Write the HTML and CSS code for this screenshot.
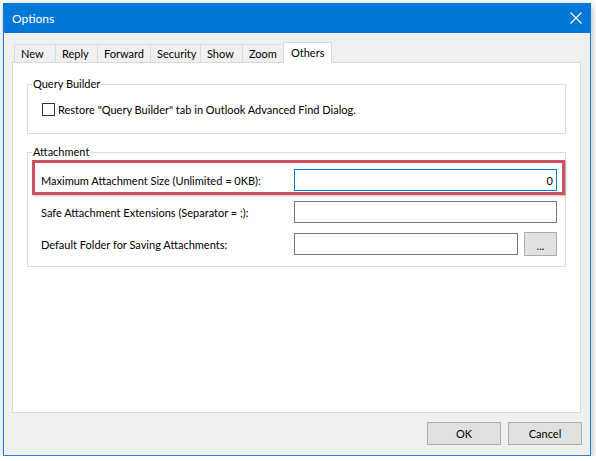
FILE: index.html
```html
<!DOCTYPE html>
<html lang="en">
<head>
    <meta charset="UTF-8">
    <meta name="viewport" content="width=device-width, initial-scale=1.0">
    <title>Options</title>
    <link rel="stylesheet" href="styles.css">
</head>
<body>
    <div class="window">
        <div class="titlebar">
            <span class="title">Options</span>
            <svg class="close" width="12" height="12" viewBox="0 0 12 12">
                <path d="M0.5 0.5 L11.5 11.5 M11.5 0.5 L0.5 11.5" stroke="#fff" stroke-width="1.1" fill="none"/>
            </svg>
        </div>

        <div class="content">
            <!-- Tabs -->
            <div class="tabs">
                <div class="tab">New</div>
                <div class="tab">Reply</div>
                <div class="tab">Forward</div>
                <div class="tab">Security</div>
                <div class="tab">Show</div>
                <div class="tab">Zoom</div>
                <div class="tab active">Others</div>
            </div>

            <div class="panel">
                <fieldset class="group group-query">
                    <legend>Query Builder</legend>
                    <label class="check">
                        <input type="checkbox" class="checkbox">
                        <span>Restore "Query Builder" tab in Outlook Advanced Find Dialog.</span>
                    </label>
                </fieldset>

                <fieldset class="group group-attach">
                    <legend>Attachment</legend>
                    <div class="group-body">
                        <div class="row highlight">
                            <label class="row-label">Maximum Attachment Size (Unlimited = 0KB):</label>
                            <input type="text" class="field focused" value="0">
                        </div>
                        <div class="row">
                            <label class="row-label">Safe Attachment Extensions (Separator = ;):</label>
                            <input type="text" class="field">
                        </div>
                        <div class="row row-folder">
                            <label class="row-label">Default Folder for Saving Attachments:</label>
                            <input type="text" class="field short">
                            <button class="btn browse">...</button>
                        </div>
                    </div>
                </fieldset>
            </div>

            <!-- Dialog buttons -->
            <div class="actions">
                <button class="btn">OK</button>
                <button class="btn">Cancel</button>
            </div>
        </div>
    </div>
</body>
</html>
```

FILE: styles.css
```css
* {
    box-sizing: border-box;
}
body {
    margin: 0;
    background: #fff;
    font-family: Lato, "Liberation Sans", sans-serif;
    font-size: 11px;
    color: #000;
}
.window {
    margin: 3px 0 0 3px;
    width: 588px;
    height: 453px;
    border: 1px solid #1c7fd4;
    border-top: none;
    background: #f0f0f0;
    display: flex;
    flex-direction: column;
    box-shadow: 1px 2px 8px rgba(0, 0, 0, 0.28);
}
/* Title bar */
.titlebar {
    height: 30px;
    flex: none;
    margin: 0 -1px;
    padding: 0 9px 0 9px;
    background: #0078d7;
    color: #fff;
    font-size: 12px;
    display: flex;
    align-items: center;
    justify-content: space-between;
}
.close {
    display: block;
}
.content {
    flex: 1;
    display: flex;
    flex-direction: column;
    padding: 9px 9px 10px 8px;
}
/* Tabs */
.tabs {
    display: flex;
    align-items: flex-end;
    padding-left: 2px;
    margin-bottom: -1px;
    position: relative;
    z-index: 1;
}
.tab {
    height: 18px;
    margin-bottom: 1px;
    padding-left: 6px;
    line-height: 17px;
    border: 1px solid #d9d9d9;
    border-bottom: none;
    background: #f0f0f0;
    white-space: nowrap;
}
.tab + .tab {
    margin-left: -1px;
}
.tab:nth-child(1) { width: 42px; }
.tab:nth-child(2) { width: 43px; }
.tab:nth-child(3) { width: 54px; }
.tab:nth-child(4) { width: 51px; }
.tab:nth-child(5) { width: 43px; }
.tab:nth-child(6) { width: 42px; }
.tab.active {
    width: 49px;
    height: 21px;
    margin-bottom: 0;
    padding-left: 7px;
    line-height: 19px;
    background: #fff;
}
.panel {
    flex: 1;
    background: #fff;
    border: 1px solid #d9d9d9;
    padding: 0 14px;
}
/* Group boxes */
.group {
    margin: 0;
    padding: 0;
    min-width: 0;
    border: 1px solid #dcdcdc;
}
.group legend {
    margin-left: 4px;
    padding: 0 1px;
    line-height: 14px;
}
.group-query {
    margin-top: 14px;
}
.group-attach {
    margin-top: 11px;
}
.group-body {
    padding: 0 8px 10px 13px;
}
.check {
    display: flex;
    align-items: center;
    padding: 12px 0 17px 14px;
}
.checkbox {
    appearance: none;
    margin: 0 3px 0 0;
    width: 13px;
    height: 13px;
    border: 1px solid #333;
    background: #fff;
}
/* Attachment rows */
.row {
    display: flex;
    align-items: center;
    margin-top: 6px;
}
.row-label {
    flex: 1;
}
.highlight {
    margin: 1px -8px 0 -9px;
    padding: 6px 5px 1px 6px;
    border: 3px solid #cd5260;
    box-shadow: 1px 1px 2px rgba(0, 0, 0, 0.25);
}
.row-folder {
    margin-top: 9px;
}
.field {
    width: 263px;
    height: 22px;
    margin: 0;
    padding: 0 3px;
    border: 1px solid #7a7a7a;
    font: inherit;
    outline: none;
    background: #fff;
}
.field.focused {
    border-color: #0078d7;
    text-align: right;
}
.field.short {
    width: 224px;
}
/* Buttons */
.btn {
    width: 74px;
    height: 23px;
    margin: 0;
    padding: 0;
    background: #e1e1e1;
    border: 1px solid #adadad;
    font: inherit;
    color: #000;
}
.browse {
    width: 33px;
    height: 24px;
    margin-left: 6px;
    padding-top: 2px;
}
.actions {
    display: flex;
    justify-content: flex-end;
    gap: 7px;
    margin: 9px -1px 0 0;
}
```
